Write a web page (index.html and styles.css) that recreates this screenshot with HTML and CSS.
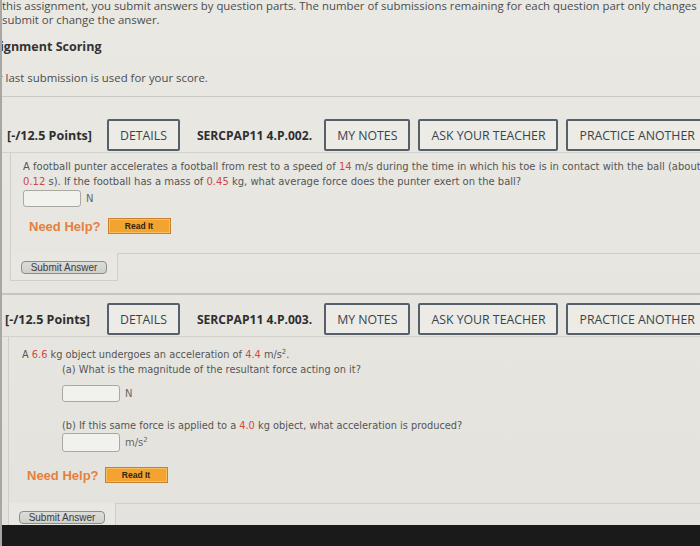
FILE: index.html
```html
<!DOCTYPE html>
<html>
<head>
<meta charset="utf-8">
<link rel="stylesheet" href="styles.css">
</head>
<body>
<div class="page">
  <div class="intro">
    <p class="intro-text">this assignment, you submit answers by question parts. The number of submissions remaining for each question part only changes<br>submit or change the answer.</p>
    <h3 class="scoring">ignment Scoring</h3>
    <p class="last"><span class="cut">r</span> last submission is used for your score.</p>
  </div>
  <div class="sep sep-intro"></div>

  <section class="question q1">
    <div class="qhead">
      <span class="points">[-/12.5 Points]</span>
      <span class="btn btn-details">DETAILS</span>
      <span class="code">SERCPAP11 4.P.002.</span>
      <span class="btn btn-notes">MY NOTES</span>
      <span class="btn btn-ask">ASK YOUR TEACHER</span>
      <span class="btn btn-practice">PRACTICE ANOTHER</span>
    </div>
    <div class="qbody">
      <p class="qtext">A football punter accelerates a football from rest to a speed of <span class="num">14</span> m/s during the time in which his toe is in contact with the ball (about <span class="num">0.12</span> s). If the football has a mass of <span class="num">0.45</span> kg, what average force does the punter exert on the ball?</p>
      <div class="answer"><span class="input"></span><span class="unit">N</span></div>
      <div class="help"><span class="need">Need Help?</span><span class="readit">Read It</span></div>
    </div>
    <div class="submit-row">
      <div class="submit-tab"><span class="submit">Submit Answer</span></div>
      <div class="submit-rest"></div>
    </div>
  </section>
  <div class="sep sep-q"></div>

  <section class="question q2">
    <div class="qhead">
      <span class="points">[-/12.5 Points]</span>
      <span class="btn btn-details">DETAILS</span>
      <span class="code">SERCPAP11 4.P.003.</span>
      <span class="btn btn-notes">MY NOTES</span>
      <span class="btn btn-ask">ASK YOUR TEACHER</span>
      <span class="btn btn-practice">PRACTICE ANOTHER</span>
    </div>
    <div class="qbody">
      <p class="qtext">A <span class="num">6.6</span> kg object undergoes an acceleration of <span class="num">4.4</span> m/s<sup>2</sup>.</p>
      <p class="qtext part part-a">(a) What is the magnitude of the resultant force acting on it?</p>
      <div class="answer part ans-a"><span class="input"></span><span class="unit">N</span></div>
      <p class="qtext part part-b">(b) If this same force is applied to a <span class="num">4.0</span> kg object, what acceleration is produced?</p>
      <div class="answer part ans-b"><span class="input input-b"></span><span class="unit">m/s<sup>2</sup></span></div>
      <div class="help"><span class="need">Need Help?</span><span class="readit">Read It</span></div>
    </div>
    <div class="submit-row">
      <div class="submit-tab"><span class="submit">Submit Answer</span></div>
      <div class="submit-rest"></div>
    </div>
  </section>

  <div class="taskbar"></div>
</div>
</body>
</html>
```

FILE: styles.css
```css
html, body {
  margin: 0;
  padding: 0;
}
body {
  background: #e7e6e1;
  width: 700px;
  height: 546px;
  overflow: hidden;
  font-family: "Open Sans", "Liberation Sans", sans-serif;
}
.page {
  width: 700px;
  height: 546px;
  overflow: hidden;
  display: flex;
  flex-direction: column;
  border-left: 2px solid #a8a7a2;
  box-sizing: border-box;
  position: relative;
  background: linear-gradient(180deg, #e9e8e3 0%, #e6e5e0 60%, #e3e2dd 100%);
}
.intro {
  margin-top: -1px;
  color: #4c4c4c;
}
.intro-text {
  margin: 0;
  font-size: 11.4px;
  line-height: 14px;
  white-space: nowrap;
}
.scoring {
  margin: 12px 0 0 -2px;
  font-size: 12.5px;
  line-height: 16px;
  font-weight: 700;
  color: #333;
}
.last {
  margin: 16px 0 0 -4px;
  font-size: 11.4px;
  line-height: 14px;
}
.sep {
  flex: none;
  background: #cac9c4;
}
.sep-intro {
  height: 1px;
  margin-top: 11px;
}
.sep-q {
  height: 2px;
  margin-top: 12px;
  background: #c6c5c0;
}
.question {
  flex: none;
}
.qhead {
  display: flex;
  align-items: center;
  white-space: nowrap;
  border-bottom: 1px solid #d2d1cc;
  padding-bottom: 1px;
  color: #333;
}
.q1 .qhead {
  margin-top: 22px;
  padding-left: 5px;
}
.q2 .qhead {
  margin-top: 8px;
  padding-left: 3px;
}
.points {
  font-weight: 700;
  font-size: 12.5px;
  color: #2e2e2e;
}
.code {
  font-weight: 700;
  font-size: 12.1px;
  color: #2e2e2e;
}
.btn {
  flex: none;
  font-size: 12.3px;
  line-height: 17px;
  color: #39434c;
  border: 2px solid #55606a;
  border-radius: 2px;
  padding: 5.5px 11px;
  background: #ecebe6;
}
.btn-details { margin-left: 15px; }
.q2 .btn-details { margin-left: 17px; }
.code { margin-left: 17px; }
.btn-notes { margin-left: 12px; }
.btn-ask { margin-left: 8px; }
.btn-practice { margin-left: 8px; }

.qbody {
  margin-left: 8px;
  border-left: 1px solid #cfcec9;
  border-bottom: 1px solid #cfcec9;
  padding-left: 12px;
  color: #555;
  font-family: "DejaVu Sans", "Liberation Sans", sans-serif;
}
.q1 .qbody {
  padding-top: 6px;
  padding-bottom: 19px;
}
.q2 .qbody {
  margin-left: 6px;
  padding-left: 13px;
  padding-top: 10px;
  padding-bottom: 20px;
}
.qtext {
  margin: 0;
  font-size: 9.8px;
  line-height: 15px;
  white-space: nowrap;
}
.q1 .qtext {
  white-space: normal;
  width: 688px;
  font-size: 10px;
}
.num {
  color: #cf4a44;
}
sup {
  font-size: 7px;
  line-height: 0;
  vertical-align: 4px;
}
.answer {
  display: flex;
  align-items: center;
  height: 18px;
  font-size: 10px;
}
.input {
  display: inline-block;
  width: 56px;
  height: 15px;
  border: 1px solid #a9a8a3;
  border-radius: 3px;
  background: #f1f1ee;
}
.unit {
  margin-left: 5px;
  color: #666;
}
.part {
  margin-left: 40px;
}
.ans-a {
  margin-top: 7px;
}
.part-b {
  margin-top: 16px;
}
.ans-b {
  height: 19px;
}
.input-b {
  height: 17px;
}
.help {
  display: flex;
  align-items: center;
  margin-top: 11px;
  margin-left: 6px;
}
.q2 .help {
  margin-top: 15px;
  margin-left: 5px;
}
.need {
  font-family: "Liberation Sans", Arial, sans-serif;
  font-weight: 700;
  font-size: 13px;
  color: #e4803c;
}
.readit {
  margin-left: 7px;
  width: 61px;
  height: 14px;
  border: 1px solid #c9802a;
  box-shadow: inset 0 0 0 1px #f7bd5e;
  background: #f3a330;
  font-family: "Liberation Sans", Arial, sans-serif;
  font-weight: 700;
  font-size: 8.5px;
  line-height: 14px;
  text-align: center;
  color: #2f2412;
}
.q2 .readit {
  margin-left: 6px;
}
.submit-row {
  display: flex;
}
.submit-tab {
  margin-left: 8px;
  width: 108px;
  box-sizing: border-box;
  border-left: 1px solid #cfcec9;
  border-right: 1px solid #cfcec9;
  border-bottom: 1px solid #cfcec9;
  padding: 8px 0 6px 10px;
  margin-top: -1px;
  background: #e8e7e2;
}
.q2 .submit-tab {
  margin-left: 6px;
  padding-left: 10px;
}
.submit {
  display: block;
  width: 86px;
  height: 13px;
  box-sizing: border-box;
  border: 1px solid #8d8c88;
  border-radius: 4px;
  background: linear-gradient(#dcdcd8, #cfcfcb);
  font-family: "Liberation Sans", Arial, sans-serif;
  font-size: 10px;
  line-height: 11px;
  text-align: center;
  color: #3d3d3d;
}
.submit-rest {
  flex: 1;
}
.taskbar {
  position: absolute;
  left: -2px;
  right: 0;
  top: 525px;
  height: 30px;
  background: #1b1a1a;
}
```
